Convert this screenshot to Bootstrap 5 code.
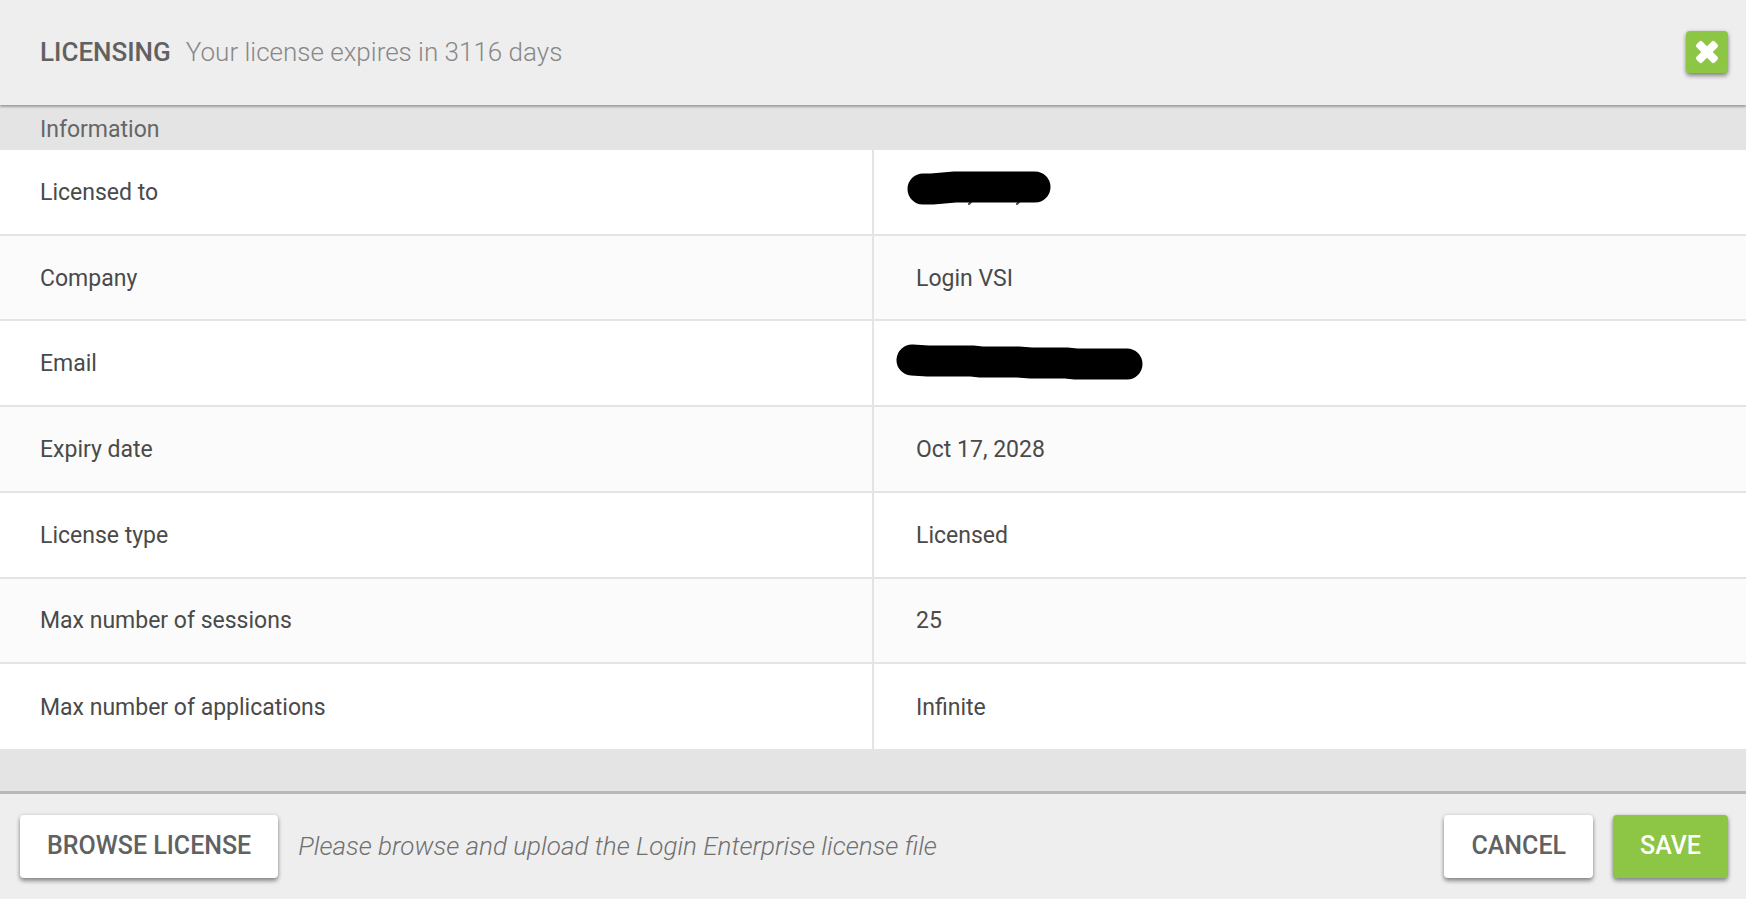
<!DOCTYPE html>
<html lang="en">
<head>
<meta charset="utf-8">
<meta name="viewport" content="width=device-width, initial-scale=1">
<title>Licensing</title>
<link href="https://cdn.jsdelivr.net/npm/bootstrap@5.3.0/dist/css/bootstrap.min.css" rel="stylesheet">
<style>
  body { font-family: Roboto, "Liberation Sans", sans-serif; background: #e4e4e4; color: #4a4a4a; font-size: 23px; line-height: 30px; }
  .panel-bar { background: #eee; padding-right: 18px; }
  .top-bar { padding-left: 40px; padding-bottom: 1px; height: 105px; box-shadow: 0 2px 2px rgba(0,0,0,.3); z-index: 1; }
  .top-bar h1 { margin-right: 15px; font-size: 26px; line-height: 32px; font-weight: 500; color: #616161; }
  .top-bar p { font-size: 26px; line-height: 32px; font-weight: 300; color: #888; }
  .bottom-bar { padding-left: 20px; padding-bottom: 1px; height: 108px; border-top: 3px solid #b8b8b8; }
  .hint { font-size: 26px; line-height: 32px; font-weight: 300; font-style: italic; color: #707070; }
  .section-title { padding: 10px 40px 5px; font-size: 23px; line-height: 30px; font-weight: 400; color: #666; }
  .info-table { table-layout: fixed; height: 599px; background: #fff; }
  .info-table th, .info-table td { height: 85px; font-weight: 400; padding: 2px 40px 0; width: 50%; vertical-align: middle; border-top: 2px solid #e4e4e4; }
  .info-table td { padding: 2px 42px 0; border-left: 2px solid #e4e4e4; }
  .info-table tr:first-child > * { height: 84px; border-top: 0; }
  .info-table tr:nth-child(even) { background: #fbfbfb; }
  .redaction { display: block; overflow: visible; fill: none; stroke: #000; stroke-width: 31px; stroke-linecap: round; stroke-linejoin: round; }
  .redaction .descender { stroke: #444; stroke-width: 2px; }
  .action { height: 63px; padding: 0 27px; border: 0; border-radius: 4px; font-size: 25px; line-height: 32px; font-weight: 500; text-transform: uppercase; background: #fff; color: #616161; box-shadow: 0 3px 4px rgba(0,0,0,.4), 0 0 4px rgba(0,0,0,.12); }
  .action-green { background: #8dc544; color: #fff; }
  .close-box { width: 42px; height: 42px; padding: 0; }
  .bar-gap { gap: 20px; }
</style>
</head>
<body>
<div class="d-flex flex-column min-vh-100">
  <header class="panel-bar top-bar d-flex align-items-center position-relative">
    <h1 class="mb-0">LICENSING</h1>
    <p class="m-0">Your license expires in 3116 days</p>
    <button type="button" class="action action-green close-box ms-auto d-flex align-items-center justify-content-center" aria-label="Close">
      <svg width="24" height="24" viewBox="-12 -12 24 24" fill="#fff" aria-hidden="true">
        <rect x="-12.8" y="-4" width="25.6" height="8" rx="2" transform="rotate(45)"/>
        <rect x="-12.8" y="-4" width="25.6" height="8" rx="2" transform="rotate(-45)"/>
      </svg>
    </button>
  </header>
  <main class="flex-grow-1">
    <h2 class="section-title m-0">Information</h2>
    <table class="info-table w-100">
      <tbody>
        <tr><th scope="row">Licensed to</th><td>
          <svg class="redaction" width="140" height="30" role="img" aria-label="Name hidden">
            <path class="descender" d="M53 26l3-3M101 26l3-3"/>
            <path d="M7 11H16L39 9H119"/>
          </svg></td></tr>
        <tr><th scope="row">Company</th><td>Login VSI</td></tr>
        <tr><th scope="row">Email</th><td>
          <svg class="redaction" width="230" height="30" role="img" aria-label="Email hidden">
            <path d="M-4 11L12 12H56L65 13H102L115 14H150L160 15H211"/>
          </svg></td></tr>
        <tr><th scope="row">Expiry date</th><td>Oct 17, 2028</td></tr>
        <tr><th scope="row">License type</th><td>Licensed</td></tr>
        <tr><th scope="row">Max number of sessions</th><td>25</td></tr>
        <tr><th scope="row">Max number of applications</th><td>Infinite</td></tr>
      </tbody>
    </table>
  </main>
  <footer class="panel-bar bottom-bar bar-gap d-flex align-items-center">
    <button type="button" class="action">Browse license</button>
    <span class="hint">Please browse and upload the Login Enterprise license file</span>
    <button type="button" class="action ms-auto">Cancel</button>
    <button type="button" class="action action-green">Save</button>
  </footer>
</div>
<script src="https://cdn.jsdelivr.net/npm/bootstrap@5.3.0/dist/js/bootstrap.bundle.min.js"></script>
</body>
</html>
